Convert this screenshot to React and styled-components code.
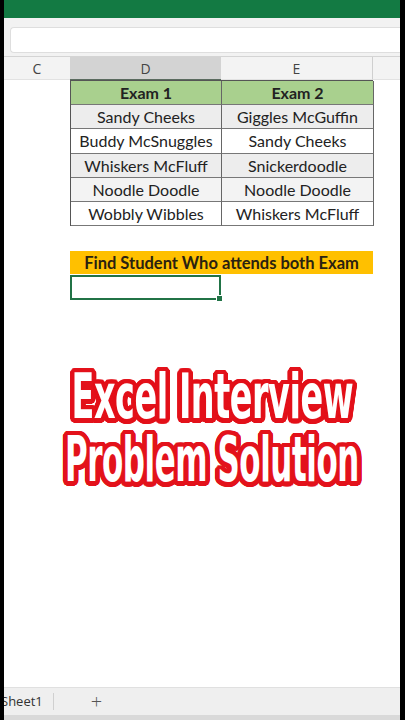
import React from 'react';
import styled, { createGlobalStyle } from 'styled-components';

const Global = createGlobalStyle`
  html, body { margin: 0; padding: 0; background: #000; }
  body { font-family: Lato, "Open Sans", sans-serif; }
`;

const Frame = styled.div`
  width: 405px;
  height: 720px;
  box-sizing: border-box;
  padding: 0 5px 0 4px;
  background: #000;
  overflow: hidden;
`;

const Screen = styled.div`
  height: 100%;
  display: flex;
  flex-direction: column;
  background: #fff;
  overflow: hidden;
`;

const Ribbon = styled.div`
  height: 18px;
  background: #137a43;
  flex-shrink: 0;
`;

const FormulaArea = styled.div`
  height: 39px;
  box-sizing: border-box;
  padding: 9px 0 6px 6px;
  background: #f2f2f2;
  border-bottom: 1px solid #d4d4d4;
  flex-shrink: 0;
`;

const FormulaBox = styled.div`
  height: 24px;
  background: #fff;
  border: 1px solid #dedede;
  border-right: none;
  border-radius: 4px 0 0 4px;
`;

const ColumnHeader = styled.div`
  display: grid;
  grid-template-columns: 66px 151px 152px 1fr;
  height: 23px;
  background: #f3f3f3;
  flex-shrink: 0;
`;

const ColLabel = styled.div`
  display: flex;
  align-items: center;
  justify-content: center;
  font-family: "Open Sans", sans-serif;
  font-size: 14px;
  color: #444;
  background: ${p => (p.$active ? '#d3d3d3' : 'transparent')};
  border-bottom: 1px solid ${p => (p.$active ? '#5b6b5f' : '#e2e2e2')};
  border-right: ${p => (p.$edge ? '1px solid #cfcfcf' : 'none')};
`;

const Sheet = styled.div`
  flex: 1;
  padding: 0 0 0 66px;
  display: flex;
  flex-direction: column;
`;

const Table = styled.div`
  display: grid;
  grid-template-columns: 151px 152px;
  width: 303px;
  border-left: 1px solid #555;
  border-top: 1px solid #555;
  box-sizing: border-box;
`;

const Cell = styled.div`
  height: 24.2px;
  box-sizing: border-box;
  display: flex;
  align-items: center;
  justify-content: center;
  font-size: 16px;
  color: #222;
  white-space: nowrap;
  border-right: 1px solid #666;
  border-bottom: 1px solid #777;
  background: ${p => p.$bg};
  font-weight: ${p => (p.$head ? 700 : 400)};
`;

const Banner = styled.div`
  margin-top: 25px;
  width: 303px;
  height: 23px;
  background: #ffc000;
  display: flex;
  align-items: center;
  justify-content: center;
  font-size: 16.5px;
  font-weight: 700;
  color: #2a2210;
  white-space: nowrap;
`;

const Selected = styled.div`
  position: relative;
  margin-top: 1px;
  width: 151px;
  height: 25px;
  box-sizing: border-box;
  border: 2px solid #217346;
`;

const Handle = styled.span`
  position: absolute;
  right: -4px;
  bottom: -4px;
  width: 5px;
  height: 5px;
  background: #217346;
  border: 1px solid #fff;
`;

const SY = 1.55;

// outline built before the stretch, so x and y radii are pre-divided
const outline = sx => {
  const list = [];
  for (let r = 1; r <= 4.6; r += 0.9) {
    for (let a = 0; a < 360; a += 12) {
      const x = ((Math.cos((a * Math.PI) / 180) * r) / sx).toFixed(2);
      const y = ((Math.sin((a * Math.PI) / 180) * r) / SY).toFixed(2);
      list.push(`${x}px ${y}px 0 #e3121b`);
    }
  }
  return list.join(', ');
};

const Title = styled.div`
  margin: 66px 0 0 -46px;
  display: flex;
  flex-direction: column;
  align-items: center;
  font-family: "DejaVu Sans Condensed", "Liberation Sans Narrow", sans-serif;
  font-weight: 700;
  color: #fff;
`;

const TitleLine = styled.div`
  font-size: 40px;
  line-height: 63px;
  letter-spacing: -0.5px;
  transform: scale(${p => p.$sx}, ${SY});
  text-shadow: ${p => outline(p.$sx)};
  white-space: nowrap;
`;

const Tabs = styled.div`
  height: 27px;
  flex-shrink: 0;
  display: flex;
  align-items: center;
  background: #efefef;
  border-top: 1px solid #e0e0e0;
  border-bottom: 5px solid #d9d9d9;
  font-family: "Open Sans", sans-serif;
`;

const TabName = styled.div`
  margin-left: -3px;
  padding-right: 10px;
  font-size: 13px;
  color: #333;
  border-right: 1px solid #d0d0d0;
  line-height: 17px;
`;

const AddSheet = styled.div`
  margin-left: 37px;
  font-size: 20px;
  font-weight: 300;
  color: #555;
  line-height: 20px;
`;

const rows = [
  ['Sandy Cheeks', 'Giggles McGuffin', '#ededed'],
  ['Buddy McSnuggles', 'Sandy Cheeks', '#ffffff'],
  ['Whiskers McFluff', 'Snickerdoodle', '#ededed'],
  ['Noodle Doodle', 'Noodle Doodle', '#f3f3f3'],
  ['Wobbly Wibbles', 'Whiskers McFluff', '#ffffff'],
];

export default function App() {
  return (
    <>
      <Global />
      <Frame>
        <Screen>
          <Ribbon />
          <FormulaArea>
            <FormulaBox />
          </FormulaArea>
          <ColumnHeader>
            <ColLabel>C</ColLabel>
            <ColLabel $active>D</ColLabel>
            <ColLabel $edge>E</ColLabel>
            <ColLabel />
          </ColumnHeader>
          <Sheet>
            <Table>
              <Cell $head $bg="#a9d08e">Exam 1</Cell>
              <Cell $head $bg="#a9d08e">Exam 2</Cell>
              {rows.map(([a, b, bg]) => (
                <React.Fragment key={a + b}>
                  <Cell $bg={bg}>{a}</Cell>
                  <Cell $bg={bg}>{b}</Cell>
                </React.Fragment>
              ))}
            </Table>
            <Banner>Find Student Who attends both Exam</Banner>
            <Selected>
              <Handle />
            </Selected>
            <Title>
              <TitleLine $sx={0.93}>Excel Interview</TitleLine>
              <TitleLine $sx={0.86}>Problem Solution</TitleLine>
            </Title>
          </Sheet>
          <Tabs>
            <TabName>Sheet1</TabName>
            <AddSheet>+</AddSheet>
          </Tabs>
        </Screen>
      </Frame>
    </>
  );
}
